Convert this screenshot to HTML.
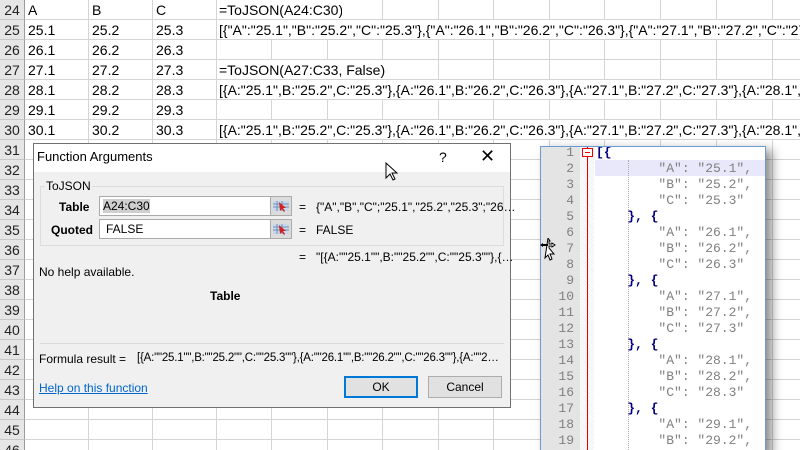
<!DOCTYPE html>
<html><head><meta charset="utf-8"><style>
*{margin:0;padding:0;box-sizing:border-box}
html,body{width:800px;height:450px;overflow:hidden}
body{background:#fff;font-family:"Liberation Sans",sans-serif;position:relative}
.rh{position:absolute;left:0;width:25px;height:20px;background:#e6e6e6;border-bottom:1px solid #c8c8c8;border-right:1px solid #9b9b9b;font-size:14px;color:#222;text-align:center;line-height:20px}
.hl{position:absolute;left:25px;right:0;height:1px;background:#d4d4d4}
.vl{position:absolute;top:0;bottom:0;width:1px;background:#d4d4d4}
.c{position:absolute;font-size:14px;color:#000;line-height:20px;white-space:nowrap;overflow:hidden}
.dlg{position:absolute;left:33px;top:143px;width:478px;height:265px;background:#f0f0f0;border:1px solid #707070;font-size:12px;color:#000}
.tb{position:absolute;left:0;top:0;right:0;height:28px;background:#fff}
.ed{position:absolute;left:540px;top:146px;width:226px;height:310px;background:#fff;border:1px solid #6b9bd1;box-shadow:6px 4px 10px rgba(0,0,0,.45);overflow:hidden}
.ln{position:absolute;left:0;width:39px;text-align:right;padding-right:6px;font-family:"Liberation Mono",monospace;font-size:13px;color:#808080;height:16px;line-height:16px}
.code{position:absolute;left:55px;font-family:"Liberation Mono",monospace;font-size:13px;color:#808080;white-space:pre;line-height:16px;height:16px}
.b{color:#000080;font-weight:bold}
.ic{position:absolute;width:22px;height:20px;background:#dcdcdc;border:1px solid #aaa}
</style></head><body>
<div class="vl" style="left:88px"></div><div class="vl" style="left:152px"></div><div class="vl" style="left:216px"></div>
<div class="vl" style="left:271px"></div><div class="vl" style="left:327px"></div><div class="vl" style="left:382px"></div><div class="vl" style="left:438px"></div><div class="vl" style="left:493px"></div><div class="vl" style="left:549px"></div><div class="vl" style="left:604px"></div><div class="vl" style="left:660px"></div><div class="vl" style="left:716px"></div><div class="vl" style="left:772px"></div>
<div id="rows"></div>
<script>
var h='';for(var i=0;i<23;i++){var y=i*20;h+='<div class="rh" style="top:'+y+'px">'+(24+i)+'</div><div class="hl" style="top:'+(y+19)+'px"></div>';}
document.getElementById('rows').innerHTML=h;
</script>
<div class="c" style="left:28px;top:0">A</div><div class="c" style="left:92px;top:0">B</div><div class="c" style="left:156px;top:0">C</div>
<div class="c" style="left:28px;top:20px">25.1</div><div class="c" style="left:92px;top:20px">25.2</div><div class="c" style="left:156px;top:20px">25.3</div>
<div class="c" style="left:28px;top:40px">26.1</div><div class="c" style="left:92px;top:40px">26.2</div><div class="c" style="left:156px;top:40px">26.3</div>
<div class="c" style="left:28px;top:60px">27.1</div><div class="c" style="left:92px;top:60px">27.2</div><div class="c" style="left:156px;top:60px">27.3</div>
<div class="c" style="left:28px;top:80px">28.1</div><div class="c" style="left:92px;top:80px">28.2</div><div class="c" style="left:156px;top:80px">28.3</div>
<div class="c" style="left:28px;top:100px">29.1</div><div class="c" style="left:92px;top:100px">29.2</div><div class="c" style="left:156px;top:100px">29.3</div>
<div class="c" style="left:28px;top:120px">30.1</div><div class="c" style="left:92px;top:120px">30.2</div><div class="c" style="left:156px;top:120px">30.3</div>
<div class="c" style="left:217px;top:0;background:#fff;padding-left:2px;height:19px;width:125px">=ToJSON(A24:C30)</div>
<div class="c" style="left:217px;top:20px;background:#fff;padding-left:2px;height:19px;width:583px">[{"A":"25.1","B":"25.2","C":"25.3"},{"A":"26.1","B":"26.2","C":"26.3"},{"A":"27.1","B":"27.2","C":"27.3"}</div>
<div class="c" style="left:217px;top:60px;background:#fff;padding-left:2px;height:19px;width:180px">=ToJSON(A27:C33, False)</div>
<div class="c" style="left:217px;top:80px;background:#fff;padding-left:2px;height:19px;width:583px">[{A:"25.1",B:"25.2",C:"25.3"},{A:"26.1",B:"26.2",C:"26.3"},{A:"27.1",B:"27.2",C:"27.3"},{A:"28.1",B</div>
<div class="c" style="left:217px;top:120px;background:#fff;padding-left:2px;height:19px;width:583px">[{A:"25.1",B:"25.2",C:"25.3"},{A:"26.1",B:"26.2",C:"26.3"},{A:"27.1",B:"27.2",C:"27.3"},{A:"28.1",B</div>

<div class="dlg">
<div class="tb"></div>
<div style="position:absolute;left:3px;top:5px;font-size:13px">Function Arguments</div>
<div style="position:absolute;left:405px;top:5px;font-size:14px">?</div>
<div style="position:absolute;left:446px;top:2px;font-size:18px;font-weight:300">✕</div>
<div style="position:absolute;left:6px;top:42px;width:464px;height:60px;border:1px solid #dcdcdc"></div>
<div style="position:absolute;left:11px;top:35px;background:#f0f0f0;padding:0 1px">ToJSON</div>
<div style="position:absolute;left:25px;top:56px;font-weight:bold">Table</div>
<div style="position:absolute;left:17px;top:79px;font-weight:bold">Quoted</div>
<div style="position:absolute;left:65px;top:52px;width:192px;height:20px;background:#fff;border:1px solid #aaa"><span style="background:#cfcfcf;margin-left:3px;line-height:18px">A24:C30</span></div>
<div style="position:absolute;left:65px;top:75px;width:192px;height:20px;background:#fff;border:1px solid #aaa;padding-left:6px;line-height:18px">FALSE</div>
<div class="ic" style="left:236px;top:52px"></div><div class="ic" style="left:236px;top:75px"></div>
<svg style="position:absolute;left:239px;top:56px" width="16" height="12"><rect x="0" y="1" width="16" height="10" fill="#c9d7ea"/><path d="M0 4h16M0 7h16M4 1v10M9 1v10" stroke="#7090b8"/><path d="M6 2l7 6-3 0 2 3-1 1-2-3-2 2z" fill="#d02020"/></svg>
<svg style="position:absolute;left:239px;top:79px" width="16" height="12"><rect x="0" y="1" width="16" height="10" fill="#c9d7ea"/><path d="M0 4h16M0 7h16M4 1v10M9 1v10" stroke="#7090b8"/><path d="M6 2l7 6-3 0 2 3-1 1-2-3-2 2z" fill="#d02020"/></svg>
<div style="position:absolute;left:265px;top:56px;white-space:nowrap">=&nbsp;&nbsp;&nbsp;{"A","B","C";"25.1","25.2","25.3";"26…</div>
<div style="position:absolute;left:265px;top:79px">=&nbsp;&nbsp;&nbsp;FALSE</div>
<div style="position:absolute;left:265px;top:106px;white-space:nowrap">=&nbsp;&nbsp;&nbsp;"[{A:""25.1"",B:""25.2"",C:""25.3""},{…</div>
<div style="position:absolute;left:5px;top:121px">No help available.</div>
<div style="position:absolute;left:176px;top:145px;font-weight:bold">Table</div>
<div style="position:absolute;left:6px;top:199px;width:464px;height:1px;background:#dcdcdc"></div>
<div style="position:absolute;left:5px;top:208px;white-space:nowrap">Formula result =</div>
<div style="position:absolute;left:103px;top:208px;width:368px;white-space:nowrap;overflow:hidden;text-overflow:ellipsis;font-size:11.5px;letter-spacing:-0.2px">[{A:""25.1"",B:""25.2"",C:""25.3""},{A:""26.1"",B:""26.2"",C:""26.3""},{A:""27.1"",B:""27.2""</div>
<div style="position:absolute;left:5px;top:237px;color:#0066cc;text-decoration:underline">Help on this function</div>
<div style="position:absolute;left:310px;top:232px;width:74px;height:22px;background:#e1e1e1;border:2px solid #0078d7;text-align:center;line-height:18px">OK</div>
<div style="position:absolute;left:394px;top:232px;width:74px;height:22px;background:#e1e1e1;border:1px solid #adadad;text-align:center;line-height:20px">Cancel</div>
</div>
<svg style="position:absolute;left:385px;top:162px" width="14" height="20"><path d="M1 1v15l4-4 3 6 2-1-3-6h5z" fill="#fff" stroke="#000"/></svg>

<div class="ed">
<div style="position:absolute;left:0;top:0;width:39px;height:100%;background:#e4e4e4"></div>
<div style="position:absolute;left:39px;top:0;width:14px;height:100%;background:repeating-linear-gradient(45deg,#f0f0f0 0 1px,#fff 1px 2px)"></div>
<div style="position:absolute;left:46px;top:0;width:1px;height:100%;background:#e00"></div>
<div style="position:absolute;left:41px;top:1px;width:11px;height:9px;border:1px solid #e00;background:#fff"><div style="margin:3px 2px;height:1px;background:#e00"></div></div>
<div style="position:absolute;left:54px;top:13px;width:171px;height:16px;background:#e8e8fa"></div>
<div style="position:absolute;left:87px;top:13px;height:290px;border-left:1px dotted #aaa"></div>
<div id="ed"></div>
</div>
<svg style="position:absolute;left:539px;top:238px" width="22" height="26"><path d="M9 0l2 3h-1v3h3v-1l3 2-3 2v-1h-3v2l5 6h-4l2 5-2 1-2-5-3 3z" fill="#fff" stroke="#000" stroke-width="1"/><path d="M1 7l3-2v1h5v2h-5v1z" fill="#000"/></svg>
<script>
var L=['<span class="b">[{</span>'],v=[25,26,27,28,29];
v.forEach(function(n,i){L.push('        "A": "'+n+'.1",');L.push('        "B": "'+n+'.2",');L.push('        "C": "'+n+'.3"');if(i<4)L.push('    <span class="b">}, {</span>');});
var s='';for(var i=0;i<19;i++){var t=i*16;s+='<div class="ln" style="top:'+(t-2)+'px">'+(i+1)+'</div><div class="code" style="top:'+(t-2)+'px">'+L[i]+'</div>';}
document.getElementById('ed').innerHTML=s;
</script>
</body></html>
